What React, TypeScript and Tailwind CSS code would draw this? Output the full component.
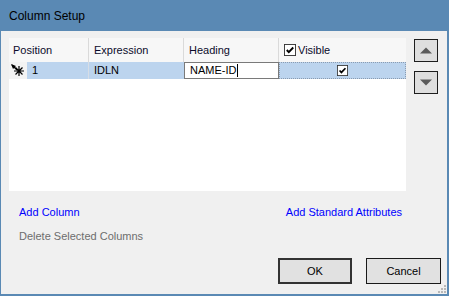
import React from "react";

function Check({ size = 13 }: { size?: number }) {
  return (
    <svg width={size} height={size} viewBox="0 0 13 13" className="block">
      <rect x="0.5" y="0.5" width="12" height="12" fill="#ffffff" stroke="#333333" />
      <path d="M3 6.5 L5.2 8.8 L10 3.8" fill="none" stroke="#000000" strokeWidth="2" />
    </svg>
  );
}

function RowMarker() {
  return (
    <svg width="14" height="13" viewBox="0 0 14 13" className="block">
      <path d="M0 0 L5 2 L2 5 Z" fill="#000" />
      <path d="M1 1 L6 6" stroke="#000" strokeWidth="1.2" />
      <path d="M8 2 L8 12 M3 7 L13 7 M4.5 3.5 L11.5 10.5 M11.5 3.5 L4.5 10.5" stroke="#000" strokeWidth="1.2" />
    </svg>
  );
}

function Arrow({ up }: { up: boolean }) {
  return (
    <button className="w-[24px] h-[23px] border border-[#1e1e1e] bg-[#dedede] flex items-center justify-center p-0">
      <svg width="12" height="7" viewBox="0 0 12 7" className="block">
        {up ? <path d="M0 6.5 L6 0.5 L12 6.5 Z" fill="#5a5a5a" /> : <path d="M0 0.5 L6 6.5 L12 0.5 Z" fill="#5a5a5a" />}
      </svg>
    </button>
  );
}

export default function App() {
  const font = { fontFamily: '"Liberation Sans", Arial, sans-serif' };
  return (
    <div className="w-[449px] h-[296px] bg-[#5a89b4] pl-[1px] pr-[2px] pb-[2px] flex flex-col" style={font}>
      <div className="h-[31px] flex items-center pl-[8px] text-[12px] text-[#000]">Column Setup</div>
      <div className="flex-1 bg-[#f0f0f0] relative flex flex-col text-[11px] leading-[13px]">
        <div className="flex pt-[7px] pl-[8px]">
          <div className="w-[397px] h-[153px] bg-white flex flex-col">
            <div className="h-[24px] flex bg-[#f7f7f7] text-[#0b0b2b] items-center">
              <div className="w-[80px] h-full flex items-center pl-[4px] border-r border-[#dadada]">Position</div>
              <div className="w-[95px] h-full flex items-center pl-[5px] border-r border-[#dadada]">Expression</div>
              <div className="w-[95px] h-full flex items-center pl-[5px] border-r border-[#dadada]">Heading</div>
              <div className="flex-1 h-full flex items-center pl-[5px] gap-[2px]">
                <Check size={12} />
                <span>Visible</span>
              </div>
            </div>
            <div className="h-[17px] flex text-black">
              <div className="w-[18px] h-full bg-[#f3f3f3] flex items-center justify-center">
                <RowMarker />
              </div>
              <div className="w-[62px] h-full bg-[#bcd4ee] flex items-center pl-[5px] border-r border-[#d6dde6]">1</div>
              <div className="w-[95px] h-full bg-[#bcd4ee] flex items-center pl-[5px]">IDLN</div>
              <div className="w-[95px] h-full bg-white border border-[#7a7a7a] flex items-center pl-[5px]">
                <span>NAME-ID</span>
                <span className="w-[1px] h-[13px] bg-black ml-[1px]" />
              </div>
              <div className="flex-1 h-full bg-[#bcd4ee] border border-dotted border-[#8a9bb0] flex items-center justify-center">
                <Check size={11} />
              </div>
            </div>
          </div>
          <div className="ml-[8px] pt-[1px] flex flex-col gap-[9px]">
            <Arrow up />
            <Arrow up={false} />
          </div>
        </div>
        <div className="mt-[15px] flex justify-between pl-[18px] pr-[45px] text-[#0000ff]">
          <span>Add Column</span>
          <span>Add Standard Attributes</span>
        </div>
        <div className="mt-[11px] pl-[18px] text-[#6d6d6d]">Delete Selected Columns</div>
        <div className="mt-[15px] flex justify-end pr-[6px] gap-[14px]">
          <button className="w-[74px] h-[26px] border-2 border-[#333333] bg-[#e1e1e1] text-black text-[11px] flex items-center justify-center">OK</button>
          <button className="w-[75px] h-[26px] border border-[#1a1a1a] bg-[#e1e1e1] text-black text-[11px] flex items-center justify-center">Cancel</button>
        </div>
        <svg width="8" height="8" viewBox="0 0 8 8" className="absolute right-[1px] bottom-[1px]">
          <rect x="6" y="0" width="2" height="2" fill="#b8b8b8" />
          <rect x="3" y="3" width="2" height="2" fill="#b8b8b8" />
          <rect x="6" y="3" width="2" height="2" fill="#b8b8b8" />
          <rect x="0" y="6" width="2" height="2" fill="#b8b8b8" />
          <rect x="3" y="6" width="2" height="2" fill="#b8b8b8" />
          <rect x="6" y="6" width="2" height="2" fill="#b8b8b8" />
        </svg>
      </div>
    </div>
  );
}
